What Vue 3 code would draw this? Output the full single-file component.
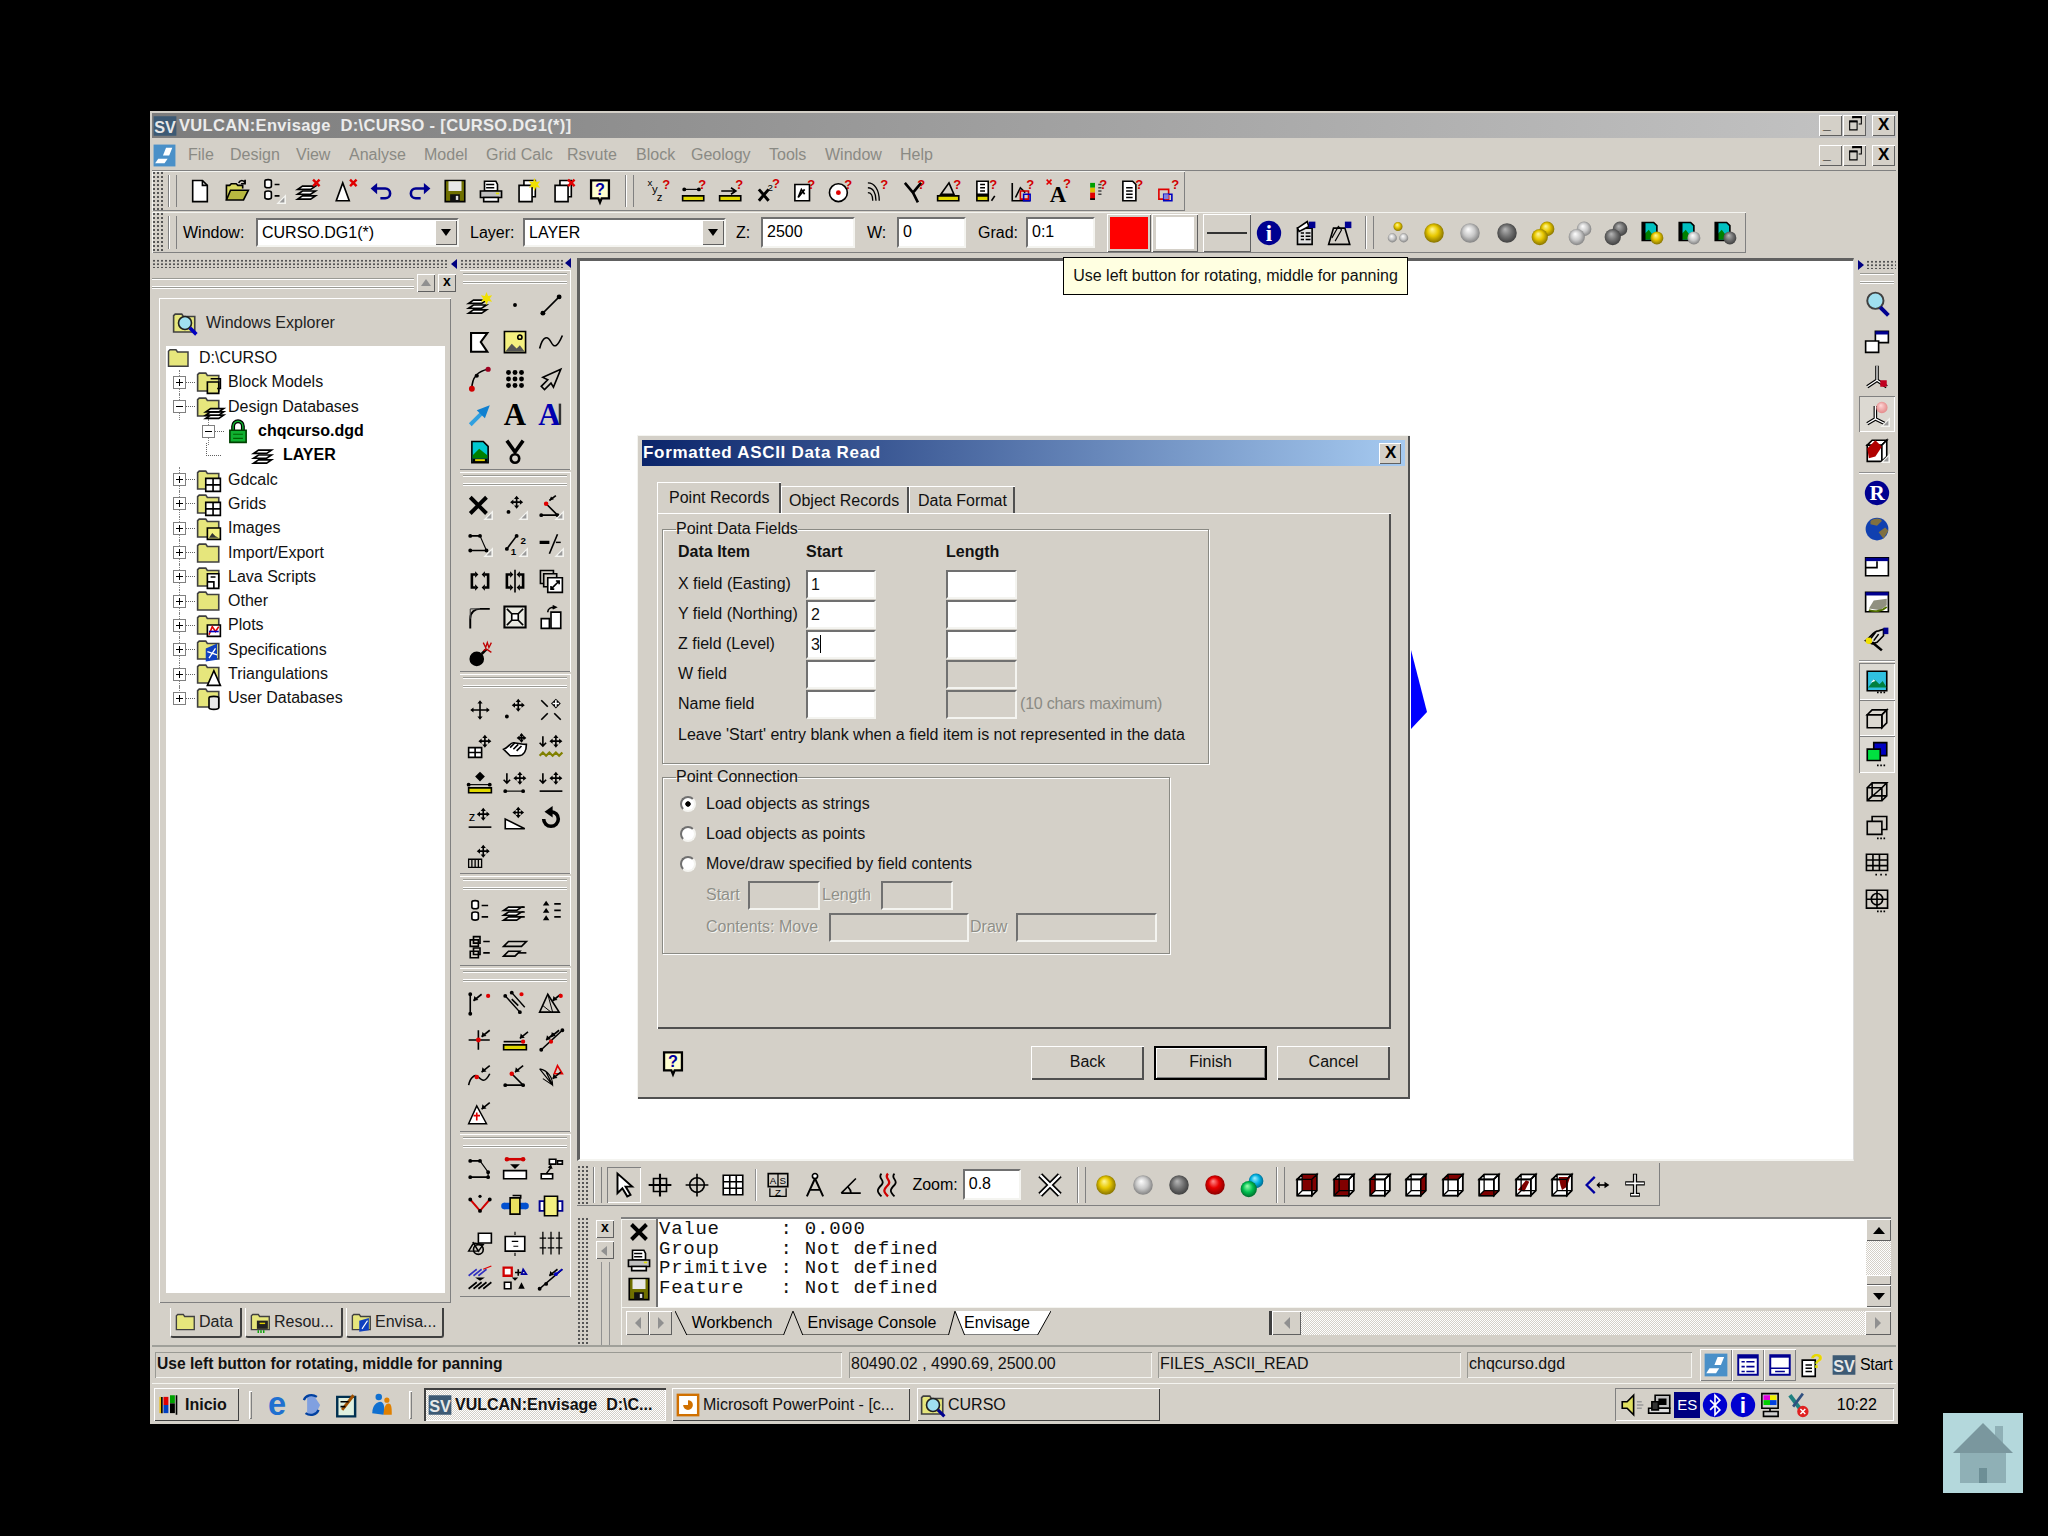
<script setup>
import { h } from 'vue'

// trazos de iconos en una rejilla de 16x16
const S = (d, c = '#000', w = 1) => ({ d, f: 'none', s: c, w })
const F = (d, c = '#000') => ({ d, f: c, s: 'none', w: 0 })
const B = (d, c = '#fff', s = '#000', w = 1) => ({ d, f: c, s, w })
const C = (x, y, r) => `M${x - r} ${y}a${r} ${r} 0 1 0 ${2 * r} 0a${r} ${r} 0 1 0 ${-2 * r} 0z`
const D = (x, y, r = 1.2, c = '#000') => F(C(x, y, r), c)
const T = (t, x, y, size, c = '#000', weight = '400', fam = 'Liberation Sans') => ({ t, x, y, size, c, weight, fam })

const RED = '#e00000'
const Q = (x = 13, y = 6.5) => T('?', x, y, 8, '#d00000', '700')
const XR = S('M10.5 1l4 4M14.5 1l-4 4', RED, 1.5)
const STAR = F('M12 0l1 2.5 2.5-.5-1.5 2 1.5 2-2.5-.5-1 2.5-1-2.5-2.5.5 1.5-2-1.5-2 2.5.5z', '#f0e000')
const CORNER = [F('M10 16h6v-6z', '#f4f4f0'), F('M12 15h3v-3z', '#9a9a9a')]
const cyl = (x, y) => B(`M${x} ${y + 1}c0-1.3 4-1.3 4 0v3c0 1.3-4 1.3-4 0z`, '#fff')
const lay = (x, y) => B(`M${x} ${y}l3-2h8l-3 2z`, '#fff')
const LAYERS = [lay(1, 13), lay(1, 10), lay(1, 7)]
const ruler = (y, x = 1, w = 13) => B(`M${x} ${y}h${w}v3H${x}z`, '#e0d800')
const mv = (x, y, r) => [
  S(`M${x - r} ${y}h${2 * r}M${x} ${y - r}v${2 * r}`),
  F(`M${x - r - 1} ${y}l2-1.6v3.2zM${x + r + 1} ${y}l-2-1.6v3.2zM${x} ${y - r - 1}l-1.6 2h3.2zM${x} ${y + r + 1}l-1.6-2h3.2z`)
]
const arr = (x, y) => [S(`M${x + 5} ${y - 4}L${x} ${y}`), F(`M${x} ${y}l.5-3 2.5 2.6z`)]
const ball = (x, y, r, g) => F(C(x, y, r), `url(#${g})`)
const FOLD = B('M1 13.5V3.5l1-1h4l1 1.5h7v9.5z', '#e6e67c', '#404040')
const sphereDoc = g => [B('M2 1.5h7l2 2v9H2z', '#00c0c0'), F('M3 9l3-3 3 4v2H3z', '#008000'), F('M2 1.5h2v11H2z', '#000'), ball(11, 11, 4, g)]
const cube = (...reds) => [
  B('M2 4.5h9v10H2z', '#fff'), B('M2 4.5l3-3h9l-3 3z', '#fff'), B('M11 4.5l3-3v10l-3 3z', '#fff'),
  ...reds.map(d => F(d, '#800000')),
  S('M5 1.5v10h9M5 11.5l-3 3M2 4.5h9v10H2zM2 4.5l3-3h9v10l-3 3M11 4.5l3-3', '#000', .8)
]
const FACE = {
  back: 'M5 1.5h9v10H5z', front: 'M2 4.5h9v10H2z', left: 'M2 4.5l3-3v10l-3 3z',
  right: 'M11 4.5l3-3v10l-3 3z', top: 'M2 4.5l3-3h9l-3 3z', bottom: 'M2 14.5l3-3h9l-3 3z'
}

const icons = {
  restore: [F('M5 1h9v2H5z'), S('M5.5 3V1.5h8v7H11'), F('M2 5h8v2H2z'), S('M2.5 6v8h7V6')],
  new: [B('M3.5 1.5h6l3 3v10h-9z'), S('M9.5 1.5v3h3')],
  open: [B('M1.5 13.5v-9h2l1-1h3l1 1h3v2', '#d8d860'), B('M1.5 13.5l2.5-6h11l-3 6z', '#b8b840'), S('M9 3c1-2 3-2 4 0M13 1v2.5h-2.5')],
  dblist: [cyl(3, 1), cyl(3, 8), S('M9 4h3M9 11h3'), ...CORNER],
  layerDel: [...LAYERS, XR],
  triDel: [B('M6 3L2 14h8z'), XR],
  undo: [S('M3.5 6.5H10a2.8 2.8 0 0 1 0 6H7', '#000090', 1.6), F('M1 6.5l4-3.5v7z', '#000090')],
  redo: [S('M12.5 6.5H6a2.8 2.8 0 0 0 0 6h3', '#000090', 1.6), F('M15 6.5l-4-3.5v7z', '#000090')],
  save: [B('M2 1.5h12v13H2z', '#707000'), F('M4 2h8v6H4z', '#e8e8e8'), F('M5 10h6v4.5H5z', '#111'), F('M8.5 11h1.5v2.5H8.5z', '#ddd')],
  print: [B('M4 2h7l1 2v4H4z'), B('M1.5 8h13v4h-13z', '#c0c0c0'), B('M3.5 12h9v2.5h-9z'), S('M5 4h5M5 6h5'), F('M11 9h2v1h-2z', '#e0e000')],
  cubeNew: [B('M5.5 1.5h7v10h-7z'), B('M2.5 4.5h8v10h-8z'), STAR],
  cubeDel: [B('M5.5 1.5h7v10h-7z'), B('M2.5 4.5h8v10h-8z'), XR],
  help: [B('M2.5 1.5h11v11H9l-1 2.5-1-2.5H2.5z', '#ffffd0', '#000', 1.4), T('?', 8, 10.5, 10, '#0000a0', '700')],

  xyzq: [T('x', 3, 5, 6), T('y', 6, 9, 7), T('z', 9, 14, 7), Q()],
  distq: [D(2, 7), D(11, 7), S('M2 7h9', '#000', .7), ruler(11), Q()],
  azimq: [S('M2 8h9M8 6l3 2-3 2'), ruler(11), Q()],
  xsqq: [S('M3 7l6 7M9 7l-6 7', '#000', 1.8), T('2', 10, 8, 6), Q(13.5, 6)],
  plotq: [B('M3 4h9v10H3z'), S('M5 12l2-5 2 3M9 7l-4 5'), Q()],
  targetq: [B(C(7, 9, 5.5)), D(7, 9, 1.5, RED), Q()],
  contq: [S('M3 3c4 0 7 4 7 11M3 6c3 0 5 3 5 8M3 9c2 0 3 2 3 5', '#000', .8), Q()],
  lineq: [S('M3 3l5 6 5-6M8 9L11 15', '#000', 1.6), Q()],
  triq: [S('M3 10L8 3l3 7z'), ruler(11), Q()],
  docq: [B('M3 2h7v8H3z'), S('M5 4h3M5 6h3M5 8h3'), ruler(11, 3, 7), S('M12 14l2-3'), Q()],
  chartq: [S('M2 3v11h11M4 12l3-6 3 3'), B('M7 8h5v5H7z', 'none', '#d00000'), B('M9 10h4v4H9z', 'none', '#0000c0'), Q()],
  textq: [S('M1 1l3 3M4 1L1 4', RED, 1), T('A', 8, 15, 14, '#000', '700', 'Liberation Serif'), Q(13.5, 6)],
  barq: [F('M5 3h3v3H5z', '#00a000'), F('M5 6h3v3H5z', '#e0c000'), F('M5 9h3v4H5z', RED), S('M5 13h3'), S('M10 4h2M10 6h2M10 8h2M10 10h2', '#444'), Q()],
  pageq: [B('M3 2h6l2 2v10H3z'), S('M5 6h4M5 8h4M5 10h4M5 12h4'), Q()],
  cubeq: [B('M3 7h6v6H3z', 'none', RED), B('M6 10h5v4H6z', 'none', '#0000c0'), F('M6 10h3v3H6z', '#8080e0'), Q()],

  info: [F(C(8, 8, 7.5), '#000090'), T('i', 8, 13, 14, '#fff', '700', 'Liberation Serif')],
  rep: [B('M4 5h9v10H4z', '#e0e0e0'), S('M6 8h2M6 10h2M6 12h2M9 8h3M9 10h3M9 12h3'), B('M4 5l6-4 1 3-6 3z'), F('M11 1h4v4h-4z', '#000090')],
  rep2: [S('M1 15l3-10h7l3 10z'), S('M3 11l4-7 2 2M5 13l4-7', '#000', .7), F('M11 1h4v4h-4z', '#000090')],
  tri3: [ball(8, 4, 2.8, 'bY'), ball(4.5, 11, 2.8, 'bW'), ball(11.5, 11, 2.8, 'bW')],
  bY: [ball(8, 8, 6, 'bY')],
  bW: [ball(8, 8, 6, 'bW')],
  bD: [ball(8, 8, 6, 'bD')],
  bR: [ball(8, 8, 6, 'bR')],
  bCG: [ball(10.5, 5.5, 4.5, 'bC'), ball(6, 10.5, 5, 'bG')],
  pY: [ball(10.5, 5.5, 4.5, 'bY'), ball(6, 10.5, 5, 'bY')],
  pW: [ball(10.5, 5.5, 4.5, 'bW'), ball(6, 10.5, 5, 'bW')],
  pD: [ball(10.5, 5.5, 4.5, 'bD'), ball(6, 10.5, 5, 'bD')],
  dY: sphereDoc('bY'),
  dW: sphereDoc('bW'),
  dD: sphereDoc('bD'),

  layerNew: [...LAYERS, STAR],
  point: [D(8, 8, 1.2)],
  line: [S('M3 13L13 3'), D(3, 13, 1.5), D(13, 3, 1.5)],
  flag: [B('M2.5 2.5h10l-4 5.5 4 6h-10z', '#fff', '#000', 1.3)],
  image: [B('M1.5 1.5h13v13h-13z', '#f4f080'), F('M2 14l4-5 3 3 2-2 3 4z', '#555'), B(C(11, 5, 1.3), '#f4f080')],
  curve: [S('M1 12c2-8 5-8 7-4s4 3 7-4')],
  arc: [S('M3 14c0-7 4-11 10-12', '#000', 1), D(3, 14, 1.8, '#d00000'), D(13, 2, 1.6, '#a00020'), D(6, 6, 1.3)],
  grid: [4, 8, 12].flatMap(y => [4, 8, 12].map(x => D(x, y, 1.5))),
  arrowOut: [B('M14 2L3 7l3 1.5-4 4 2 2 4-4L9.5 13z', '#d4d0c8', '#000', 1)],
  blueArrow: [S('M2 14L9 7', '#30a0e0', 2.4), F('M14 2L6 5l5 5z', '#1080d0')],
  textA: [T('A', 8, 14, 19, '#000', '700', 'Liberation Serif')],
  text3d: [T('A', 7, 14, 19, '#0000b0', '700', 'Liberation Serif'), S('M13.5 1v13', '#333', 1.5)],
  exe: [B('M3 1.5h7l3 3v10H3z', '#00c8d0'), F('M3.5 10l4-4 5 4v2h-9z', '#008000'), F('M3.5 12h9v2.5h-9z', '#000'), S('M5 13h6', '#e0d000', 1.2)],
  scissors: [S('M3 1l5 7 5-7', '#000', 2.2), B(C(8, 12, 2.6), 'none', '#000', 1.6)],

  xmark: [S('M2 2l10 10M12 2L2 12', '#000', 2.4), ...CORNER],
  ptmove: [D(4, 11), ...mv(9, 5, 3), ...CORNER],
  nearpt: [S('M2 13h10M5 6l7 7'), D(2, 13), D(12, 13), D(5, 6, 1.4, RED), S('M11 1L7 4'), F('M7 4l1-2.4 1.8 1.7z'), ...CORNER],
  conn: [S('M2 3h6M2 12h10'), S('M8 3l4 9', '#000', .7), D(2, 3), D(8, 3), D(2, 12), D(12, 12), ...CORNER],
  num12: [S('M3 11l6-8'), D(3, 11), D(9, 3), T('1', 7, 15, 6, '#000', '700'), T('2', 13, 8, 6, '#000', '700'), ...CORNER],
  break: [S('M1 7h6', '#000', 2), S('M7 14l5-12'), S('M11 7h3', '#000', .9), ...CORNER],
  sq2: [S('M5 4H3v8h2M11 4h2v8h-2', '#000', 1.6), F('M5 2l2 2-2 2zM5 10l2 2-2 2zM11 2L9 4l2 2zM11 10l-2 2 2 2z')],
  sq3: [S('M5 4H3v8h2M11 4h2v8h-2', '#000', 1.6), S('M8 1v14'), F('M5 2l2 2-2 2zM5 10l2 2-2 2zM11 2L9 4l2 2zM11 10l-2 2 2 2z')],
  copyx: [B('M1.5 1.5h8v8h-8z', '#d4d0c8'), B('M3.5 3.5h8v8h-8z', '#d4d0c8'), B('M6 6h9v9H6z'), S('M8 13l5-5M11 8h2v2M8 11v2h2')],
  fillet: [S('M2 15V9c0-4 3-6 6-6h6', '#000', 1.2), S('M2 3h6M2 3v6', '#444', .7)],
  fit: [B('M1.5 1.5h13v13h-13z', '#e8e8e0', '#000', 1.3), S('M3 3l3 3M13 3l-3 3M3 13l3-3M13 13l-3-3'), B('M6 6h4v4H6z')],
  dup: [B('M8 5h6v10H8z'), B('M2 9h5v6H2z'), S('M6 5c0-2 2-3 4-3M9 1l2 1-2 1')],
  bomb: [F(C(6, 11, 4.5)), S('M9 8l3-3', '#000', 1.6), S('M10 1l1.5 3 1-3 1 3 1.5-3M10 6l2-1 3 2', '#c00000', .8)],

  move: [...mv(8, 8, 5)],
  movept: [D(3, 12), ...mv(10, 5, 3)],
  spread: [S('M2 2l4 4M2 14l4-4M14 14l-4-4'), F('M11 1l3 3-3 3-3-3z'), S('M9 4h4M11 2v4', '#fff')],
  gridmove: [B('M1 9h8v6H1z'), S('M5 9v6M1 12h8'), ...mv(11, 5, 3)],
  handmove: [B('M1 10c3-1 4-4 6-4s5 1 8 1c0 3-1 7-5 7H5z'), S('M5 9l3-3M7 10l3-3M9 11l3-3'), ...mv(12, 3, 2)],
  dtmove: [...mv(11, 5, 3), S('M3 2v6M1 6l2 2 2-2'), S('M1 14l2-2 2 2 2-2 2 2 2-2 2 2 2-2', '#808000', 1.4)],
  rulermove: [F('M8 1l3 3-3 3-3-3z'), S('M1 9h13', '#000', .7), D(1, 9), D(14, 9), ruler(11, 1, 14)],
  ptsmove: [...mv(11, 5, 3), S('M3 2v6M1 6l2 2 2-2'), S('M2 13h11', '#000', .7), D(13, 13), D(2, 13)],
  linemove: [...mv(11, 5, 3), S('M3 2v6M1 6l2 2 2-2'), S('M1 13h14')],
  zmove: [T('z', 3, 9, 8), S('M1 13h14'), ...mv(10, 5, 3)],
  angmove: [B('M2 14V8l12 6z'), ...mv(10, 4, 2.6)],
  rotate: [S('M3.5 8a4.5 4.5 0 1 0 4.5-4.5H7', '#000', 2.2), F('M9 0L4 3.5 9 7z')],
  cylmove: [S('M1 10h8v5H1zM3 10v5M5 10v5M7 10v5', '#000', .8), ...mv(10, 5, 3)],

  dbl: [cyl(3, 1), cyl(3, 8), S('M9 4h4M9 11h4')],
  layerl: [...LAYERS, S('M12 5h2M12 8h2M12 11h2')],
  tril: [F('M5 1l2 3H3z'), F('M5 5.5l2 3H3z'), F('M5 10l2 3H3z'), S('M10 3h4M10 7h4M10 11h4')],
  cubel: [B('M2 3h5v4H2z', 'none'), B('M4 1h4v4H4z', 'none'), B('M2 10h5v4H2z', 'none'), B('M4 8h4v4H4z', 'none'), S('M10 4h4M10 11h4')],
  planel: [B('M1 7l3-3h11l-3 3z', '#d4d0c8'), B('M1 13l3-3h7l-3 3z', '#d4d0c8'), S('M10 11h5')],

  snapV: [S('M2 2v12'), D(2, 2), D(2, 14), ...arr(4, 6), D(13, 3, 1.3, RED)],
  snapRect: [S('M2 3l9 10M6 1l8 9', '#000', .9), D(2, 3), D(11, 13), D(6, 1), S('M6 5l4 4'), D(12, 2, 1.3, RED)],
  snapTri: [B('M6 2L1 13h12z', 'none'), S('M3 9l5 4M6 2l3 11', '#000', .6), ...arr(9, 6), D(14, 3, 1.3, RED)],
  snapCross: [S('M1 8h13M7 2v12'), D(7, 8, 1.5, RED), ...arr(9, 6)],
  snapRuler: [S('M1 9h13'), D(13, 9, 1.3, RED), ...arr(11, 7), ruler(11, 1, 14)],
  snapLine: [S('M2 14L15 2'), D(8, 9, 1.3, RED), D(2, 14), D(15, 2), ...arr(8, 6), ...arr(5, 8)],
  snapCurve: [S('M1 13c1-5 4-7 6-5s4 4 7-2'), D(6, 8, 1.4, RED), ...arr(9, 5)],
  snapPt: [S('M2 13h11L6 6'), D(2, 13), D(13, 13), D(6, 6, 1.4, RED), ...arr(8, 5)],
  snapCone: [S('M1 3c5 1 8 5 8 10L1 3M3 9l6 4M5 5l4 8', '#000', .7), B('M12 1l3 5h-5z', 'none', RED), ...arr(9, 9)],
  snapTri2: [B('M6 3L1 14h11z', '#fff', '#000', .9), S('M4 9h4M6 7v5', RED, 1), ...arr(9, 5)],

  polyl: [S('M2 3h6M2 13h11'), S('M8 3l5 7v3', '#000', .7), D(2, 3), D(8, 3), D(2, 13), D(13, 13), D(13, 10)],
  dimbox: [S('M3 2h10', '#d00000', 1.6), D(3, 2, 1.4, '#d00000'), D(13, 2, 1.4, '#d00000'), F('M5 5h6l-3 3z'), B('M1 9h14v5H1z')],
  flow: [B('M7 2h4v3H7z'), B('M12 3h3v2h-3z'), B('M2 11h7v3H2z'), S('M5 11l3-4'), F('M8 5l-2 2 3 1z')],
  zig: [S('M2 4l6 7 6-7', '#d00000', 1.2), D(2, 4), D(8, 11), D(14, 4), D(8, 2, 1)],
  blueBar: [F('M1 6h14v4H1z', '#0050d0'), D(1.5, 8, 2, '#0050d0'), D(14.5, 8, 2, '#0050d0'), B('M5 3h6v10H5z', '#e8e060'), B('M6.5 1.5h5v2', 'none')],
  yellowBox: [B('M1 5h3v6H1z', '#fff', '#000090', 1.2), B('M12 5h3v6h-3z', '#fff', '#000090', 1.2), B('M4 2h8v12H4z', '#f4f080')],
  mesh: [S('M1 13l3-5 3 5zM4 8l3 5 3-4z', '#000', .9), B('M7 2h8v6H7z'), B(C(7, 12, 3), 'none')],
  noteBox: [B('M2 4h12v9H2z'), S('M8 1v2M8 14v2M6 7h4M7 10h3', '#000', .7)],
  dash: [S('M3 1v14M8 1v14M13 1v14M1 5h4M6 5h4M11 5h4M1 11h4M6 11h4M11 11h4', '#000', .8)],
  hatch: [S('M1 6l5-4M4 6l5-4M7 6l5-4', '#3030c0'), S('M10 2l5-2', RED, .8), F('M5 7h6l-3 2z'), S('M1 14l5-4M4 14l5-4M7 14l5-4M10 14l5-4')],
  shape2: [B('M1 1h5v5H1z', '#fff', '#d00000', 1.4), S('M8 4h4M10 2v4'), B('M13 2l2 3h-3z', 'none', '#0000a0'), F('M6 7h4l-2 2z'), B('M1.5 10h4v4h-4z'), F('M12 10l2 4h-4z')],
  arrowLine: [S('M1 14L15 2'), D(1, 14), D(5, 11), D(11, 5, 1.2, '#0000c0'), S('M11 5l4-3', '#0000c0'), ...arr(7, 6)],

  mag: [B(C(7, 6, 5), '#a0e0f0', '#404040', 1.2), S('M10 10l5 5', '#000090', 2.4)],
  windows: [B('M7 2h8v7H7z'), F('M7 2h8v2H7z', '#000090'), B('M1 8h8v7H1z')],
  axes: [S('M8 1v9M8 10l6 4M8 10l-6 4', '#000', 2.2), S('M8 1v9M8 10l6 4M8 10l-6 4', '#fff', .8), F('M10 10h4v4h-4z', '#c00020')],
  axesBall: [S('M7 3v8M7 11l6 3M7 11l-5 3', '#000', 2.2), S('M7 3v8M7 11l6 3M7 11l-5 3', '#fff', .8), ball(11, 4, 3.5, 'bP'), ...CORNER],
  cubeRed: [B('M2 5h9v10H2z'), B('M2 5l3-3h9l-3 3z'), B('M11 5l3-3v10l-3 3z'), F('M2 7l5-5 4 4-4 6-4 1z', '#b00000'), ...CORNER],
  R: [F(C(8, 8, 7.5), '#000090'), T('R', 8, 12.5, 13, '#fff', '700', 'Liberation Serif')],
  globe: [F(C(8, 8, 7), '#1040b0'), F('M4 3c3-2 6-2 7 0l-3 3-4-1zM9 10l4-3 2 2-3 5z', '#807040')],
  split: [B('M1 3h14v11H1z'), F('M1 3h14v2H1z', '#000090'), S('M1 9h7V5')],
  img2: [B('M1 2h14v12H1z'), F('M1 2h14v2H1z', '#000090'), F('M3 12l3-5 8-1v4l-4 3z', '#909080'), S('M3 13c3 1 8 1 11-2', '#507000', 1.2)],
  handKey: [B('M1 9c3-2 5-6 8-6l3-1v4l-4 4-3 1z', '#e0e0d8'), S('M4 8l3-4M6 9l3-4'), F('M12 1h3v4h-3z', '#000090'), S('M5 10l6 5', '#000', 1.6), D(3, 9, 2, '#f0e000')],
  picGreen: [B('M2 2h12v12H2z', '#30c0e0'), F('M2.5 12l4-5 3 3 2-2 2.5 4z', '#008040'), F('M4 9l2-2 1 1z', '#fff'), S('M8 15h1M10 15h1M12 15h1', '#000', 1.2)],
  box: [B('M2 6h9v8H2z', 'none'), B('M2 6l3-3h9l-3 3z', 'none'), B('M11 6l3-3v8l-3 3z', 'none')],
  layersCol: [F('M6 1h8v8H6z', '#0000c0'), F('M2 5h8v7H2z', '#00e040'), S('M2 5h8v7H2zM6 5V1h8v8h-4'), S('M8 15h1M10 15h1M12 15h1', '#000', 1.2)],
  wire: [S('M2 6h9v8H2zM2 6l3-3h9l-3 3M11 14l3-3V3M2 14l9-8M5 3v8h9M5 11l-3 3')],
  stack: [B('M5 1.5h9v8H5z', 'none'), B('M2 4.5h9v8H2z', '#d4d0c8'), S('M8 15h1M10 15h1M12 15h1', '#000', 1.2)],
  table: [B('M1.5 2h13v10h-13z', 'none'), S('M5.5 2v10M9.5 2v10M1.5 5.5h13M1.5 9h13M7 14.5h1M10 14.5h1M13 14.5h1')],
  targetDots: [B('M1.5 2h13v11h-13z', 'none'), B(C(8, 7.5, 3.5), 'none'), S('M8 2v11M1.5 7.5h13M8 15h1M10 15h1M12 15h1')],

  arrow: [B('M4 1v12l3-3 3 5 2-1-3-5h4z', '#fff', '#000', 1.2)],
  crossBox: [B('M4 4h8v8H4z', 'none'), S('M8 1v14M1 8h14', '#000', 1.3)],
  crossCircle: [B(C(8, 8, 4.5), 'none'), S('M8 1v14M1 8h14')],
  grid2: [B('M2 2h12v12H2z'), S('M6 2v12M10 2v12M2 6h12M2 10h12')],
  abz: [B('M2 1h12v8H2z', 'none'), T('A', 5, 7.5, 6), T('S', 11, 7.5, 6), S('M8 1v8M3 10v5h10v-5', '#000', .8), T('Z', 8, 15, 6)],
  compass: [S('M8 4L3 15M8 4l5 11M4.5 11h7', '#000', 1.2), B(C(8, 2.5, 1.6))],
  angle: [S('M2 13h12M2 13L11 4'), S('M8 13c0-2-1-3-2-4')],
  waves: [S('M4 1C1 4 7 5 4 8s-3 4 0 7M12 1C9 4 15 5 12 8s-3 4 0 7', '#000', 1.1), S('M8 1C5 4 11 5 8 8s-3 4 0 7', '#d00000', 1.4)],
  bigX: [S('M2 2l12 12M14 2L2 14', '#000', 3.4), S('M2 2l12 12M14 2L2 14', '#fff', 1.5)],
  c1: cube(FACE.back),
  c2: cube(FACE.front),
  c3: cube(FACE.left),
  c4: cube(FACE.right),
  c5: cube(FACE.top),
  c6: cube(FACE.bottom),
  c7: cube('M3 11l5-6 2 1-3 6z'),
  c8: cube('M6 3h7l-2 6-3 2-1-3z'),
  blueArr: [B('M6 3L1 8l5 5', 'none', '#0000a0', 1.4), S('M8 8h6'), F('M15 8l-3-2v4zM7 8l2-2v4z')],
  plane: [S('M8 1v14M2 7h12M5 14h6', '#000', 2.6), S('M8 1.5v13M2.5 7h11M5.5 14h5', '#fff', 1)],

  logo3: [F('M1 1h14v14H1z', '#4a90c8'), F('M2 13l2-3h6l-2 3z', '#fff'), F('M7 8l2-5h4l-2 5z', '#fff')],
  listv: [B('M2 2h12v12H2z', '#fff', '#000090', 1.2), F('M2 2h12v2H2z', '#000090'), S('M4 6h2M7 6h5M4 9h2M7 9h5M4 12h2M7 12h5', '#000090')],
  panelv: [B('M2 2h12v12H2z', '#fff', '#000090', 1.2), F('M2 2h12v1.5H2z', '#000090'), S('M2 10h12M5 12h6', '#000090')],
  qdoc: [B('M2 5h8v10H2z'), S('M4 8h4M4 10h4M4 12h4'), T('?', 11, 10, 13, '#e8d800', '700')],
  sv: [F('M1 2h14v12H1z', '#3d5a74'), T('SV', 8, 12, 10, '#e8e8e8', '700')],
  win: [S('M2 3v10', '#f0c000', 1), F('M4 3h3v5H4z', RED), F('M4 8h3v5H4z', '#0040c0'), F('M8 2h3v5H8z', '#00a000'), F('M8 7h3v6H8z', '#000'), S('M3 3v10M12 2v12')],
  ie: [T('e', 8, 14, 20, '#2070d0', '700')],
  desk: [F('M5 2h4l4 6-3 6H5z', '#80a0e0'), S('M3 5c1-3 5-4 8-2M12 11c-1 3-5 4-8 2', '#0040a0', 1.4)],
  outl: [B('M2 3h11v12H2z', '#e0f0e0', '#003050', 1.5), S('M5 11l7-9', '#a05000', 1.8), S('M4 6h5M4 9h3')],
  msn: [D(6, 3, 2, '#1070d0'), D(11, 5, 1.6, '#e08000'), F('M2 13c0-5 3-7 5-7s3 3 2 8z', '#1070d0'), F('M9 14c0-4 1-7 3-7s2 3 2 7z', '#e08000')],
  ppt: [F('M1 1h14v14H1z', '#d07000'), B('M3 3h10v10H3z', '#fff', '#fff'), F('M8 8V5a3 3 0 1 1-3 3z', '#d07000')],
  foldMag: [FOLD, B(C(8, 8, 4), '#a0e0f0', '#202020', 1), S('M11 11l4 4', '#000090', 2)],
  speaker: [F('M2 6h3l4-4v12l-4-4H2z', '#e0e060'), S('M2 6h3l4-4v12l-4-4H2z'), S('M11 6h3M11 8h4M11 10h3', '#999', .8)],
  comp: [B('M5 2h9v8H5z', '#c0c0c0'), F('M7 4h5v4H7z', '#000'), B('M1 10h13v3H1z', '#e0e0e0'), B('M3 6h4v5H3z', '#333')],
  bt: [F(C(8, 8, 7.5), '#0000d0'), S('M5 5l6 6-3 3V2l3 3-6 6', '#fff', 1)],
  infoT: [F(C(8, 8, 7.5), '#0000d0'), T('i', 8, 13, 14, '#fff', '700')],
  monitor: [B('M3 1h10v9H3z', '#d0d0d0'), F('M4 2h4v3H4z', '#e000e0'), F('M8 2h4v3H8z', '#f0f000'), F('M4 5h4v3H4z', '#00d000'), F('M8 5h4v3H8z', '#0040e0'), B('M4 12h9v3H4z', '#d0d0d0'), S('M8 10v2')],
  tools: [S('M3 2l6 8', '#208080', 2.4), S('M11 1L5 9', '#305080', 1.6), D(11, 12, 3.5, '#e02020'), S('M9.5 10.5l3 3M12.5 10.5l-3 3', '#fff', .9)],

  folder: [FOLD],
  fBlock: [FOLD, B('M7 8h7v7H7z', '#e6e67c'), B('M9 6h6v6h-2', 'none')],
  fDesign: [FOLD, lay(6, 15), lay(6, 13), lay(6, 11)],
  fGrid: [FOLD, B('M6 7h9v8H6z'), S('M10.5 7v8M6 11h9')],
  fImg: [FOLD, B('M7 8h8v7H7z', '#f4f080'), F('M8 14l2-3 2 2 2 1z', '#333')],
  fScript: [FOLD, B('M7 6h7v9H7z'), S('M9 8h3M7 11h4v4')],
  fPlot: [FOLD, B('M7 8h8v7H7z'), S('M8 14l2-5 2 3 2-3', RED), S('M8 12h6', '#0000c0')],
  fSpec: [FOLD, F('M6 7l7-3v10l-7 1z', '#1040c0'), S('M8 13l4-6M7 9l6 2', '#fff', .8)],
  fTri: [FOLD, B('M11 6l-4 9h8z')],
  fDb: [FOLD, B('M8 8c0-1.3 6-1.3 6 0v6c0 1.3-6 1.3-6 0z', '#e8e8e8')],
  lock: [S('M5 8V5a3 3 0 0 1 6 0v3', '#000', 2.4), S('M5 8V5a3 3 0 0 1 6 0v3', '#10b030', .9), B('M3 7.5h10v7.5H3z', '#10b030', '#004000'), S('M5 10h6M5 12.5h6', '#006000', .7)],
  layerItem: [...LAYERS],
  expl: [FOLD, B(C(8, 8, 4), '#a0e0f0', '#202020', 1), S('M11 11l4 4', '#0000c0', 2.2)],
  fRes: [FOLD, F('M5 7h8v6H5z', '#222'), S('M6 14v2M8 14v2M10 14v2', '#00a000'), S('M7 9h4', '#e0d000')],
  fEnv: [FOLD, F('M6 7l7-2v9l-7 1z', '#1040c0'), S('M8 13l4-6', '#fff', .8)]
}

const Ico = (props) => h('svg', { class: 'ic', viewBox: '0 0 16 16', width: props.s || 26, height: props.s || 26 },
  (icons[props.n] || []).map(p => p.t
    ? h('text', { x: p.x, y: p.y, 'font-size': p.size, fill: p.c, 'font-weight': p.weight, 'font-family': p.fam, 'text-anchor': 'middle' }, p.t)
    : h('path', { d: p.d, fill: p.f, stroke: p.s, 'stroke-width': p.w })))
Ico.props = ['n', 's']

const menu = ['File', 'Design', 'View', 'Analyse', 'Model', 'Grid Calc', 'Rsvute', 'Block', 'Geology', 'Tools', 'Window', 'Help']
const tb1a = ['new', 'open', 'dblist', 'layerDel', 'triDel', 'undo', 'redo', 'save', 'print', 'cubeNew', 'cubeDel', 'help']
const tb1b = ['xyzq', 'distq', 'azimq', 'xsqq', 'plotq', 'targetq', 'contq', 'lineq', 'triq', 'docq', 'chartq', 'textq', 'barq', 'pageq', 'cubeq']
const tb2b = ['tri3', 'bY', 'bW', 'bD', 'pY', 'pW', 'pD', 'dY', 'dW', 'dD']

const toolGroups = [
  ['layerNew', 'point', 'line', 'flag', 'image', 'curve', 'arc', 'grid', 'arrowOut', 'blueArrow', 'textA', 'text3d', 'exe', 'scissors'],
  ['xmark', 'ptmove', 'nearpt', 'conn', 'num12', 'break', 'sq2', 'sq3', 'copyx', 'fillet', 'fit', 'dup', 'bomb'],
  ['move', 'movept', 'spread', 'gridmove', 'handmove', 'dtmove', 'rulermove', 'ptsmove', 'linemove', 'zmove', 'angmove', 'rotate', 'cylmove'],
  ['dbl', 'layerl', 'tril', 'cubel', 'planel'],
  ['snapV', 'snapRect', 'snapTri', 'snapCross', 'snapRuler', 'snapLine', 'snapCurve', 'snapPt', 'snapCone', 'snapTri2'],
  ['polyl', 'dimbox', 'flow', 'zig', 'blueBar', 'yellowBox', 'mesh', 'noteBox', 'dash', 'hatch', 'shape2', 'arrowLine']
]

const rightA = [
  { n: 'mag' }, { n: 'windows' }, { n: 'axes' }, { n: 'axesBall', on: true }, { n: 'cubeRed' }
]
const rightB = ['R', 'globe', 'split', 'img2', 'handKey']
const rightC = [
  { n: 'picGreen', on: true }, { n: 'box', on: true }, { n: 'layersCol', on: true },
  { n: 'wire' }, { n: 'stack' }, { n: 'table' }, { n: 'targetDots' }
]

const tree = [
  { lv: 1, ic: 'fBlock', t: 'Block Models', ex: '+' },
  { lv: 1, ic: 'fDesign', t: 'Design Databases', ex: '-' },
  { lv: 2, ic: 'lock', t: 'chqcurso.dgd', ex: '-', b: true },
  { lv: 3, ic: 'layerItem', t: 'LAYER', b: true },
  { lv: 1, ic: 'fGrid', t: 'Gdcalc', ex: '+' },
  { lv: 1, ic: 'fGrid', t: 'Grids', ex: '+' },
  { lv: 1, ic: 'fImg', t: 'Images', ex: '+' },
  { lv: 1, ic: 'folder', t: 'Import/Export', ex: '+' },
  { lv: 1, ic: 'fScript', t: 'Lava Scripts', ex: '+' },
  { lv: 1, ic: 'folder', t: 'Other', ex: '+' },
  { lv: 1, ic: 'fPlot', t: 'Plots', ex: '+' },
  { lv: 1, ic: 'fSpec', t: 'Specifications', ex: '+' },
  { lv: 1, ic: 'fTri', t: 'Triangulations', ex: '+' },
  { lv: 1, ic: 'fDb', t: 'User Databases', ex: '+', last: true }
]

const dataRows = [
  { label: 'X field (Easting)', start: '1', lenOff: false },
  { label: 'Y field (Northing)', start: '2', lenOff: false },
  { label: 'Z field (Level)', start: '3', lenOff: false, caret: true },
  { label: 'W field', start: '', lenOff: true },
  { label: 'Name field', start: '', lenOff: true, note: '(10 chars maximum)' }
]
const radios = [
  { t: 'Load objects as strings', on: true },
  { t: 'Load objects as points' },
  { t: 'Move/draw specified by field contents' }
]
const outLines = ['Value     : 0.000', 'Group     : Not defined', 'Primitive : Not defined', 'Feature   : Not defined']
const cubes = ['c1', 'c2', 'c3', 'c4', 'c5', 'c6', 'c7', 'c8', 'blueArr', 'plane']
const tray = ['speaker', 'comp', 'ES', 'bt', 'infoT', 'monitor', 'tools']
</script>

<template>
  <div class="screen">
    <svg class="defs" width="0" height="0">
      <defs>
        <radialGradient id="bY" cx=".5" cy=".5" r=".6" fx=".4" fy=".3"><stop offset="0" stop-color="#fff8a0" /><stop offset=".45" stop-color="#e8c800" /><stop offset="1" stop-color="#6a5a00" /></radialGradient>
        <radialGradient id="bW" cx=".5" cy=".5" r=".6" fx=".4" fy=".3"><stop offset="0" stop-color="#fff" /><stop offset=".5" stop-color="#c8c8c8" /><stop offset="1" stop-color="#6c6c6c" /></radialGradient>
        <radialGradient id="bD" cx=".5" cy=".5" r=".6" fx=".4" fy=".3"><stop offset="0" stop-color="#b8b8b8" /><stop offset=".5" stop-color="#707070" /><stop offset="1" stop-color="#303030" /></radialGradient>
        <radialGradient id="bR" cx=".5" cy=".5" r=".6" fx=".4" fy=".3"><stop offset="0" stop-color="#ff9090" /><stop offset=".45" stop-color="#e80000" /><stop offset="1" stop-color="#700000" /></radialGradient>
        <radialGradient id="bC" cx=".5" cy=".5" r=".6" fx=".4" fy=".3"><stop offset="0" stop-color="#a0f0ff" /><stop offset=".5" stop-color="#00b0e0" /><stop offset="1" stop-color="#005070" /></radialGradient>
        <radialGradient id="bG" cx=".5" cy=".5" r=".6" fx=".4" fy=".3"><stop offset="0" stop-color="#a0ffb0" /><stop offset=".5" stop-color="#00c050" /><stop offset="1" stop-color="#005020" /></radialGradient>
        <radialGradient id="bP" cx=".5" cy=".5" r=".6" fx=".4" fy=".3"><stop offset="0" stop-color="#ffd8d8" /><stop offset="1" stop-color="#e08080" /></radialGradient>
      </defs>
    </svg>

    <div class="win">
      <!-- Barra de titulo -->
      <div class="title">
        <Ico n="sv" :s="26" />
        <span class="title-text">VULCAN:Envisage&nbsp; D:\CURSO - [CURSO.DG1(*)]</span>
        <div class="caps">
          <span class="cap">_</span><span class="cap"><Ico n="restore" :s="17" /></span><span class="cap x">X</span>
        </div>
      </div>

      <!-- Menu -->
      <div class="menu">
        <Ico n="logo3" :s="25" />
        <div class="menu-items">
          <span v-for="m in menu" :key="m">{{ m }}</span>
        </div>
        <div class="caps">
          <span class="cap">_</span><span class="cap"><Ico n="restore" :s="17" /></span><span class="cap x">X</span>
        </div>
      </div>

      <!-- Barras de herramientas -->
      <div class="tb-row">
        <div class="toolbar tb1">
          <i class="dots"></i><i class="handle"></i>
          <div class="btns first"><span v-for="n in tb1a" :key="n" class="tb"><Ico :n="n" /></span></div>
          <i class="handle mid"></i>
          <div class="btns"><span v-for="n in tb1b" :key="n" class="tb"><Ico :n="n" /></span></div>
        </div>
      </div>
      <div class="tb-row">
        <div class="toolbar tb2">
          <i class="dots"></i><i class="handle"></i>
          <span class="lbl win-lbl">Window:</span>
          <div class="combo c-win"><span>CURSO.DG1(*)</span><b class="arrow-btn"></b></div>
          <span class="lbl lay-lbl">Layer:</span>
          <div class="combo c-lay"><span>LAYER</span><b class="arrow-btn"></b></div>
          <span class="lbl z-lbl">Z:</span>
          <div class="field f-z">2500</div>
          <span class="lbl w-lbl">W:</span>
          <div class="field f-w">0</div>
          <span class="lbl g-lbl">Grad:</span>
          <div class="field f-g">0:1</div>
          <span class="swatch red"><i></i></span>
          <span class="swatch white"><i></i></span>
          <span class="swatch stroke"><i></i></span>
          <span class="tb t2"><Ico n="info" /></span>
          <span class="tb t2"><Ico n="rep" /></span>
          <span class="tb t2"><Ico n="rep2" /></span>
          <i class="handle mid2"></i>
          <div class="btns"><span v-for="n in tb2b" :key="n" class="tb"><Ico :n="n" /></span></div>
        </div>
      </div>

      <div class="work">
        <!-- Panel izquierdo -->
        <div class="dock">
          <div class="strip"><i class="dots-h"></i><b class="tri-l"></b></div>
          <div class="dock-head">
            <i class="bars"></i>
            <span class="mini up"></span>
            <span class="mini xx">x</span>
          </div>
          <div class="panel">
            <div class="panel-title"><Ico n="expl" /><span>Windows Explorer</span></div>
            <div class="tree">
              <div class="row root"><Ico n="folder" :s="24" /><span>D:\CURSO</span></div>
              <div v-for="r in tree" :key="r.t" class="row" :class="['lv' + r.lv, { bold: r.b, last: r.last }]">
                <span v-if="r.ex" class="exp" :class="r.ex === '+' ? 'plus' : 'minus'"></span>
                <span v-else class="exp-none"></span>
                <Ico :n="r.ic" />
                <span class="row-t">{{ r.t }}</span>
              </div>
            </div>
          </div>
          <div class="dock-tabs">
            <span class="dtab on"><Ico n="folder" />Data</span>
            <span class="dtab"><Ico n="fRes" />Resou...</span>
            <span class="dtab"><Ico n="fEnv" />Envisa...</span>
          </div>
        </div>

        <!-- Columna de herramientas -->
        <div class="tools">
          <div class="strip strip-t"><i class="dots-h"></i><b class="tri-l"></b></div>
          <div v-for="(g, i) in toolGroups" :key="i" class="tgroup">
            <i class="bars"></i>
            <div class="tgrid"><span v-for="n in g" :key="n" class="tcell"><Ico :n="n" /></span></div>
          </div>
        </div>

        <!-- Zona central -->
        <div class="center">
          <div class="top-row">
            <div class="canvas">
              <svg class="shape" width="18" height="82" viewBox="0 0 18 82"><path d="M0 0L16 62 0 79z" fill="#0000ff" /></svg>
            </div>
            <!-- Barra derecha -->
            <div class="right">
              <div class="strip strip-r"><b class="tri-r"></b><i class="dots-h"></i></div>
              <i class="bars"></i>
              <span v-for="b in rightA" :key="b.n" class="rb" :class="{ on: b.on }"><Ico :n="b.n" /></span>
              <i class="rsep"></i>
              <span v-for="n in rightB" :key="n" class="rb"><Ico :n="n" /></span>
              <i class="rsep"></i>
              <span v-for="b in rightC" :key="b.n" class="rb" :class="{ on: b.on }"><Ico :n="b.n" /></span>
            </div>
          </div>

          <div class="bt-row">
            <i class="dots-v short"></i><i class="handle"></i>
            <span class="tb on"><Ico n="arrow" /></span>
            <span class="tb"><Ico n="crossBox" /></span>
            <span class="tb"><Ico n="crossCircle" /></span>
            <span class="tb"><Ico n="grid2" /></span>
            <i class="vline"></i>
            <span class="tb"><Ico n="abz" /></span>
            <span class="tb"><Ico n="compass" /></span>
            <span class="tb"><Ico n="angle" /></span>
            <span class="tb"><Ico n="waves" /></span>
            <span class="lbl zoom-lbl">Zoom:</span>
            <div class="field f-zoom">0.8</div>
            <span class="tb zx"><Ico n="bigX" /></span>
            <i class="handle h3"></i>
            <span class="tb"><Ico n="bY" /></span>
            <span class="tb"><Ico n="bW" /></span>
            <span class="tb"><Ico n="bD" /></span>
            <span class="tb"><Ico n="bR" /></span>
            <span class="tb"><Ico n="bCG" /></span>
            <i class="handle h4"></i>
            <span v-for="n in cubes" :key="n" class="tb"><Ico :n="n" /></span>
          </div>

          <div class="output">
            <i class="dots-v"></i>
            <div class="side">
              <span class="mini xx">x</span>
              <span class="mini left"></span>
              <i class="side-bars"></i>
            </div>
            <div class="out-main">
              <div class="out-top">
                <div class="out-icons">
                  <svg class="ic" viewBox="0 0 16 16" width="24" height="24"><path d="M3 3l10 10M13 3L3 13" stroke="#000" stroke-width="2.6" fill="none" /></svg>
                  <Ico n="print" />
                  <Ico n="save" />
                </div>
                <div class="console">
                  <pre v-for="l in outLines" :key="l">{{ l }}</pre>
                </div>
                <div class="vscroll">
                  <span class="sb-btn"><b class="up-tri"></b></span>
                  <span class="sb-track"></span>
                  <span class="sb-thumb"></span>
                  <span class="sb-btn"><b class="down-tri"></b></span>
                </div>
              </div>
              <div class="out-tabs">
                <span class="sb-h"><b class="tri-g-l"></b></span>
                <span class="sb-h"><b class="tri-g-r"></b></span>
                <span class="xtab first-x"><svg class="xtab-bg" viewBox="0 0 100 24" preserveAspectRatio="none"><path d="M0 0L10 24H92L100 0" fill="#d4d0c8" stroke="#000" vector-effect="non-scaling-stroke" /></svg><em>Workbench</em></span>
                <span class="xtab sec-x"><svg class="xtab-bg" viewBox="0 0 100 24" preserveAspectRatio="none"><path d="M0 0L6 24H96L100 0" fill="#d4d0c8" stroke="#000" vector-effect="non-scaling-stroke" /></svg><em>Envisage Console</em></span>
                <span class="xtab on-x"><svg class="xtab-bg" viewBox="0 0 100 24" preserveAspectRatio="none"><path d="M0 0L10 24H86L100 0" fill="#fff" stroke="#000" vector-effect="non-scaling-stroke" /></svg><em>Envisage</em></span>
                <span class="tab-gap"></span>
                <span class="sb-h thumb-l"><b class="tri-g-l"></b></span>
                <span class="hatch"></span>
                <span class="sb-h end"><b class="tri-g-r"></b></span>
              </div>
            </div>
          </div>
        </div>
      </div>

      <!-- Barra de estado -->
      <div class="status">
        <span class="st st1">Use left button for rotating, middle for panning</span>
        <span class="st st2">80490.02 , 4990.69, 2500.00</span>
        <span class="st st3">FILES_ASCII_READ</span>
        <span class="st st4">chqcurso.dgd</span>
        <span class="st-ic on"><Ico n="logo3" /></span>
        <span class="st-ic on"><Ico n="listv" /></span>
        <span class="st-ic on"><Ico n="panelv" /></span>
        <span class="st-ic"><Ico n="qdoc" /></span>
        <span class="st-ic"><Ico n="sv" /></span>
        <span class="st-start">Start</span>
      </div>

      <!-- Barra de tareas -->
      <div class="taskbar">
        <span class="task inicio"><Ico n="win" />Inicio</span>
        <i class="tk-sep first"></i>
        <span class="quick"><Ico n="ie" /></span>
        <span class="quick"><Ico n="desk" /></span>
        <span class="quick"><Ico n="outl" /></span>
        <span class="quick"><Ico n="msn" /></span>
        <i class="tk-sep"></i>
        <span class="task t-active"><Ico n="sv" />VULCAN:Envisage&nbsp; D:\C...</span>
        <span class="task t-ppt"><Ico n="ppt" />Microsoft PowerPoint - [c...</span>
        <span class="task t-cur"><Ico n="foldMag" />CURSO</span>
        <div class="tray">
          <template v-for="n in tray" :key="n">
            <span v-if="n === 'ES'" class="es">ES</span>
            <Ico v-else :n="n" />
          </template>
          <span class="clock">10:22</span>
        </div>
      </div>

      <!-- Tooltip -->
      <div class="tooltip">Use left button for rotating, middle for panning</div>

      <!-- Dialogo -->
      <div class="dialog">
        <div class="dlg-title">
          <span>Formatted ASCII Data Read</span>
          <span class="cap x dlg-x">X</span>
        </div>
        <div class="dlg-tabs">
          <span class="dtb on">Point Records</span>
          <span class="dtb">Object Records</span>
          <span class="dtb">Data Format</span>
        </div>
        <div class="dlg-page">
          <fieldset class="fs fs1">
            <legend>Point Data Fields</legend>
            <div class="frow head">
              <b class="c-label">Data Item</b><b class="c-start">Start</b><b class="c-len">Length</b>
            </div>
            <div v-for="r in dataRows" :key="r.label" class="frow">
              <span class="c-label">{{ r.label }}</span>
              <span class="inp c-start">{{ r.start }}<i v-if="r.caret" class="caret"></i></span>
              <span class="inp c-len" :class="{ off: r.lenOff }"></span>
              <span v-if="r.note" class="note">{{ r.note }}</span>
            </div>
            <p class="hint">Leave 'Start' entry blank when a field item is not represented in the data</p>
          </fieldset>
          <fieldset class="fs fs2">
            <legend>Point Connection</legend>
            <div v-for="r in radios" :key="r.t" class="radio-row">
              <span class="radio" :class="{ on: r.on }"></span>{{ r.t }}
            </div>
            <div class="sub-row">
              <span class="dis l1">Start</span><span class="inp off s1"></span>
              <span class="dis l2">Length</span><span class="inp off s2"></span>
            </div>
            <div class="sub-row">
              <span class="dis l3">Contents: Move</span><span class="inp off s3"></span>
              <span class="dis l4">Draw</span><span class="inp off s4"></span>
            </div>
          </fieldset>
        </div>
        <div class="dlg-foot">
          <Ico n="help" />
          <span class="grow"></span>
          <span class="btn">Back</span>
          <span class="btn def">Finish</span>
          <span class="btn">Cancel</span>
        </div>
      </div>
    </div>

    <!-- Boton de inicio de la presentacion -->
    <div class="home">
      <svg width="80" height="80" viewBox="0 0 80 80">
        <path d="M52 13h8v20h-8z" fill="#8fb0b6" />
        <path d="M17 40h46v30H17z" fill="#8fb0b6" />
        <path d="M36 55h8v15h-8z" fill="#6d8f96" />
        <path d="M40 10L10 40h60z" fill="#7a979e" />
      </svg>
    </div>
  </div>
</template>

<style>
html, body { margin: 0; background: #000; }
</style>

<style scoped>
.screen {
  position: relative;
  width: 2048px;
  height: 1536px;
  background: #000;
  padding: 111px 150px 0;
  box-sizing: border-box;
  overflow: hidden;
  font-family: "Liberation Sans", Arial, sans-serif;
  font-size: 16px;
  color: #000;
}
.defs { position: absolute; }
.ic { display: block; flex: none; overflow: visible; }
i { display: block; }

.win {
  position: relative;
  width: 1748px;
  height: 1313px;
  background: #d4d0c8;
  display: flex;
  flex-direction: column;
  padding: 2px 2px 0;
  box-sizing: border-box;
}

/* Titulo y menu */
.title {
  height: 25px;
  display: flex;
  align-items: center;
  background: linear-gradient(90deg, #7c7c7c, #c4c4c4);
  color: #ececec;
  font-weight: 700;
  font-size: 16.5px;
  flex: none;
}
.title-text { margin-left: 1px; white-space: pre; letter-spacing: .33px; }
.caps { margin-left: auto; display: flex; gap: 1px; padding-right: 1px; }
.cap {
  width: 23px;
  height: 21px;
  background: #d4d0c8;
  box-shadow: inset 1px 1px #fff, inset -1px -1px #606060;
  color: #000;
  font-size: 14px;
  font-weight: 700;
  line-height: 18px;
  overflow: hidden;
  padding-left: 4px;
  box-sizing: border-box;
  flex: none;
}
.cap.x { font-size: 17px; margin-left: 5px; padding-left: 6px; line-height: 20px; }
.menu {
  height: 31px;
  display: flex;
  align-items: center;
  border-bottom: 1px solid #808080;
  box-sizing: border-box;
  flex: none;
  margin-top: 2px;
}
.menu-items { display: flex; margin-left: 11px; color: #8a8a84; font-size: 16px; }
.menu-items span:nth-child(1) { width: 42px; }
.menu-items span:nth-child(2) { width: 66px; }
.menu-items span:nth-child(3) { width: 53px; }
.menu-items span:nth-child(4) { width: 75px; }
.menu-items span:nth-child(5) { width: 62px; }
.menu-items span:nth-child(6) { width: 81px; }
.menu-items span:nth-child(7) { width: 69px; }
.menu-items span:nth-child(8) { width: 55px; }
.menu-items span:nth-child(9) { width: 78px; }
.menu-items span:nth-child(10) { width: 56px; }
.menu-items span:nth-child(11) { width: 75px; }

/* Toolbars */
.tb-row { flex: none; display: flex; }
.toolbar {
  display: flex;
  align-items: center;
  box-shadow: inset 1px 1px #f4f4f0, inset -1px -1px #808080;
}
.tb1 { height: 40px; width: 1033px; }
.tb2 { height: 41px; width: 1594px; margin-top: 1px; }
.dots {
  width: 12px;
  height: 100%;
  background: radial-gradient(#555 1px, transparent 1.3px) 0 0 / 4px 4px;
  flex: none;
}
.handle {
  width: 9px;
  height: 80%;
  margin-left: 4px;
  border-left: 1px solid #808080;
  border-right: 1px solid #808080;
  box-shadow: inset 1px 0 #fff;
  box-sizing: border-box;
  flex: none;
}
.handle.mid { margin-left: 6px; margin-right: 6px; }
.handle.mid2 { margin-left: 7px; margin-right: 6px; }
.btns { display: flex; }
.btns.first { margin-left: 5px; }
.tb {
  width: 36.4px;
  height: 36px;
  display: flex;
  align-items: center;
  justify-content: center;
  flex: none;
  box-sizing: border-box;
}
.tb.on { box-shadow: inset 1px 1px #808080, inset -1px -1px #fff; }
.lbl { flex: none; white-space: nowrap; }
.win-lbl { margin-left: 6px; width: 73px; }
.lay-lbl { margin-left: 11px; width: 53px; }
.z-lbl { margin-left: 10px; width: 25px; }
.w-lbl { margin-left: 12px; width: 30px; }
.g-lbl { margin-left: 12px; width: 48px; }
.combo {
  height: 29px;
  background: #fff;
  display: flex;
  align-items: center;
  justify-content: space-between;
  padding-left: 4px;
  box-sizing: border-box;
  border: 2px solid;
  border-color: #707070 #f4f4f0 #f4f4f0 #707070;
  font-size: 16px;
  flex: none;
}
.c-win { width: 203px; }
.c-lay { width: 203px; }
.arrow-btn {
  width: 22px;
  height: 25px;
  background: #d4d0c8;
  box-shadow: inset 1px 1px #fff, inset -1px -1px #606060;
  position: relative;
}
.arrow-btn::after {
  content: '';
  position: absolute;
  left: 6px;
  top: 9px;
  border: 5px solid transparent;
  border-top: 7px solid #000;
  border-bottom: 0;
}
.field {
  height: 31px;
  background: #fff;
  padding-left: 4px;
  box-sizing: border-box;
  border: 2px solid;
  border-color: #707070 #f4f4f0 #f4f4f0 #707070;
  line-height: 25px;
  flex: none;
}
.f-z { width: 94px; }
.f-w { width: 69px; }
.f-g { width: 69px; }
.swatch {
  width: 44px;
  height: 38px;
  box-shadow: inset 1px 1px #fff, inset -1px -1px #606060;
  display: flex;
  align-items: center;
  justify-content: center;
  flex: none;
}
.swatch.red { margin-left: 12px; background: #d4d0c8; }
.swatch.red i { width: 38px; height: 32px; background: #f00; }
.swatch.white { width: 46px; margin-left: 1px; }
.swatch.white i { width: 38px; height: 32px; background: #fff; }
.swatch.stroke { width: 48px; margin-left: 5px; }
.swatch.stroke i { width: 40px; height: 2px; background: #333; }
.t2 { width: 35.5px; }

/* Zona de trabajo */
.work {
  flex: 1;
  min-height: 0;
  display: flex;
  margin-top: 2px;
  border-bottom: 2px solid #a0a09a;
  box-sizing: border-box;
}
.dock { width: 305px; flex: none; display: flex; flex-direction: column; padding-top: 1px; box-sizing: border-box; }
.strip { height: 13px; display: flex; align-items: center; flex: none; margin: 1px 0; }
.dots-h {
  flex: 1;
  height: 9px;
  background: radial-gradient(#555 1px, transparent 1.2px) 0 0 / 4px 3.5px;
}
.tri-l { width: 0; height: 0; border: 5px solid transparent; border-right: 6px solid #000080; border-left: 0; margin-left: 2px; }
.tri-r { width: 0; height: 0; border: 5px solid transparent; border-left: 6px solid #000080; border-right: 0; margin-right: 2px; }
.dock-head { height: 22px; display: flex; align-items: center; gap: 3px; margin-top: 1px; padding-right: 1px; flex: none; }
.bars {
  display: block;
  flex: 1;
  height: 10px;
  border-top: 1px solid #9a9a94;
  border-bottom: 1px solid #9a9a94;
  box-shadow: inset 0 1px #fff, inset 0 -1px #fff, 0 1px #fff;
  box-sizing: border-box;
}
.mini {
  width: 18px;
  height: 18px;
  background: #d4d0c8;
  box-shadow: inset 1px 1px #fff, inset -1px -1px #606060;
  position: relative;
  flex: none;
  font-size: 14px;
  font-weight: 700;
  text-align: center;
  line-height: 15px;
}
.mini.up::after {
  content: '';
  position: absolute;
  left: 4px;
  top: 5px;
  border: 5px solid transparent;
  border-bottom: 7px solid #909090;
  border-top: 0;
}
.mini.left::after {
  content: '';
  position: absolute;
  left: 5px;
  top: 5px;
  border: 5px solid transparent;
  border-right: 6px solid #909090;
  border-left: 0;
}
.panel {
  flex: 1;
  margin: 4px 6px 0 7px;
  box-shadow: inset 1px 1px #fff, inset -1px -1px #808080;
  display: flex;
  flex-direction: column;
  padding: 2px 6px 10px 7px;
  min-height: 0;
}
.panel-title { height: 46px; display: flex; align-items: center; gap: 8px; padding-left: 6px; color: #222; flex: none; }
.tree { flex: 1; background: #fff; padding-top: 0; min-height: 0; position: relative; z-index: 0; }
.row { height: 24.3px; display: flex; align-items: center; white-space: nowrap; color: #111; }
.root { padding-left: 1px; gap: 8px; }
.row-t { margin-left: 6px; }
.lv1 { padding-left: 7px; }
.lv2 { padding-left: 36px; }
.lv3 { padding-left: 58px; }
.lv2 .row-t { margin-left: 7px; }
.lv3 .row-t { margin-left: 5px; }
.exp-none { width: 30px; flex: none; height: 100%; position: relative; margin-left: -2px; }
.exp-none::after { content: ''; position: absolute; left: -16px; top: 0; height: 50%; width: 14px; border-left: 1px dotted #606060; border-bottom: 1px dotted #606060; }
.exp {
  position: relative;
  width: 13px;
  height: 13px;
  border: 1px solid #808080;
  background-color: #fff;
  box-sizing: border-box;
  flex: none;
  margin-right: 10px;
  background-repeat: no-repeat;
  background-position: center;
}
.exp::after { content: ''; position: absolute; left: 12px; top: 5px; width: 9px; border-top: 1px dotted #606060; }
.exp::before { content: ''; position: absolute; left: 5px; top: -7px; height: 26px; border-left: 1px dotted #808080; z-index: -1; }
.row.last .exp::before { height: 7px; }
.plus { background-image: linear-gradient(#000, #000), linear-gradient(#000, #000); background-size: 7px 1px, 1px 7px; }
.minus { background-image: linear-gradient(#000, #000); background-size: 7px 1px; }
.bold { font-weight: 700; color: #000; }
.dock-tabs { height: 42px; display: flex; gap: 3px; padding: 5px 0 0 18px; flex: none; box-sizing: border-box; }
.dtab {
  height: 30px;
  display: flex;
  align-items: center;
  padding: 0 4px;
  width: 90px;
  box-sizing: border-box;
  white-space: nowrap;
  color: #222;
  border-bottom: 2px solid #404040;
  border-right: 2px solid #404040;
  border-left: 1px solid #fff;
  border-radius: 0 0 3px 3px;
}
.dtab:first-child { width: 72px; }
.dtab:nth-child(2) { width: 98px; }
.dtab:nth-child(3) { width: 98px; }
.dtab .ic { width: 22px; height: 22px; margin-right: 2px; }

/* Herramientas */
.tools { width: 111px; margin-left: 3px; flex: none; display: flex; flex-direction: column; padding-top: 2px; box-sizing: border-box; gap: 2px; }
.strip-t { margin: 0 0 -1px; height: 12px; }
.tgroup {
  padding: 3px 3px 0;
  box-shadow: inset 0 -1px #808080, inset 0 1px #fff;
  border-right: 1px solid #fff;
}
.tgroup > .bars { height: 10px; }
.tgrid { display: grid; grid-template-columns: repeat(3, 35.6px); grid-auto-rows: 36.6px; margin-top: 4.1px; margin-left: -1px; }
.tcell { display: flex; align-items: center; justify-content: center; }

/* Centro */
.center { flex: 1; min-width: 0; margin-left: 6px; display: flex; flex-direction: column; padding-top: 3px; box-sizing: border-box; }
.top-row { display: flex; height: 903px; flex: none; }
.canvas {
  position: relative;
  flex: 1;
  min-width: 0;
  background: #fff;
  border-left: 3px solid #606060;
  border-top: 3px solid #606060;
  border-right: 1px solid #ddd;
  border-bottom: 2px solid #f4f4f0;
  box-sizing: border-box;
}
.shape { position: absolute; left: 831px; top: 389px; }
.bt-row {
  height: 43px;
  flex: none;
  display: flex;
  align-items: center;
  width: 1083px;
  margin-top: 2px;
  box-shadow: inset -1px -1px #808080;
}
.dots-v {
  width: 12px;
  height: 100%;
  background: radial-gradient(#555 1px, transparent 1.3px) 0 0 / 4px 4px;
  flex: none;
}
.dots-v.short { height: 90%; }
.bt-row .handle { height: 36px; }
.bt-row .tb.on { width: 34px; margin-left: 5px; margin-right: 1px; }
.vline { width: 1px; height: 32px; background: #909090; box-shadow: 1px 0 #fff; margin: 0 4px; flex: none; }
.zoom-lbl { width: 52px; margin-left: 0; text-align: right; }
.f-zoom { width: 58px; margin-left: 5px; }
.zx { margin-left: 11px; }
.h3 { margin-left: 9px; margin-right: 2px; }
.h4 { margin-left: 6px; margin-right: 4px; }

.output { flex: 1; min-height: 0; display: flex; margin-top: 11px; padding-right: 5px; }
.output > .dots-v { height: 100%; }
.side { width: 32px; flex: none; display: flex; flex-direction: column; align-items: center; gap: 3px; padding-top: 3px; box-sizing: border-box; }
.side-bars { flex: 1; width: 9px; border-left: 1px solid #909090; border-right: 1px solid #909090; box-sizing: border-box; }
.out-main { flex: 1; min-width: 0; display: flex; flex-direction: column; box-shadow: inset 1px 1px #f4f4f0; border-top: 2px solid #808080; box-sizing: border-box; }
.out-top { flex: 1; min-height: 0; display: flex; }
.out-icons { width: 35px; flex: none; display: flex; flex-direction: column; align-items: center; gap: 3px; padding-top: 1px; }
.console {
  flex: 1;
  min-width: 0;
  background: #fff;
  border-left: 2px solid #707070;
  padding-top: 0;
  box-sizing: border-box;
}
.console pre {
  margin: 0;
  height: 19.7px;
  font-family: "Liberation Mono", monospace;
  font-size: 19px;
  letter-spacing: .75px;
  line-height: 20px;
  color: #111;
  padding-left: 1px;
}
.vscroll { width: 25px; flex: none; display: flex; flex-direction: column; background: #fff; }
.sb-btn { height: 22px; background: #d4d0c8; box-shadow: inset 1px 1px #fff, inset -1px -1px #606060; display: flex; align-items: center; justify-content: center; flex: none; }
.sb-track { flex: 1; background: repeating-conic-gradient(#d4d0c8 0 25%, #fff 0 50%) 0 0 / 2px 2px; }
.sb-thumb { height: 10px; background: #d4d0c8; box-shadow: inset 1px 1px #fff, inset -1px -1px #606060; flex: none; }
.up-tri { border: 6px solid transparent; border-bottom: 7px solid #000; border-top: 0; }
.down-tri { border: 6px solid transparent; border-top: 7px solid #000; border-bottom: 0; }
.out-tabs { height: 30px; flex: none; display: flex; align-items: flex-start; padding-left: 5px; padding-top: 3px; padding-bottom: 4px; box-sizing: content-box; border-top: 1px solid #f4f4f0; }
.sb-h { width: 23px; height: 24px; background: #d4d0c8; box-shadow: inset 1px 1px #fff, inset -1px -1px #606060; display: flex; align-items: center; justify-content: center; flex: none; }
.tri-g-l { border: 6px solid transparent; border-right: 6px solid #909090; border-left: 0; }
.tri-g-r { border: 6px solid transparent; border-left: 6px solid #909090; border-right: 0; }
.xtab { position: relative; height: 24px; display: flex; align-items: center; justify-content: center; flex: none; box-sizing: border-box; }
.xtab em { position: relative; font-style: normal; }
.xtab-bg { position: absolute; inset: 0; width: 100%; height: 100%; }
.first-x { width: 118px; margin-left: 3px; padding-right: 4px; }
.sec-x { width: 162px; padding-right: 4px; }
.on-x { width: 96px; padding-right: 12px; }
.tab-gap { width: 218px; flex: none; }
.thumb-l { width: 32px; border-left: 3px solid #404040; box-sizing: border-box; }
.hatch { flex: 1; height: 24px; background: repeating-conic-gradient(#d4d0c8 0 25%, #fff 0 50%) 0 0 / 2px 2px; }
.end { width: 26px; }

/* Derecha */
.right { width: 38px; margin-left: 4px; flex: none; display: flex; flex-direction: column; align-items: stretch; box-sizing: border-box; }
.strip-r { margin: 0; }
.right > .bars { flex: none; margin: 2px 2px 3px; }
.rb { height: 36.5px; display: flex; align-items: center; justify-content: center; flex: none; margin: 0 1px; }
.rb.on { box-shadow: inset 1px 1px #808080, inset -1px -1px #fff; background: #dcd9d2; }
.rsep { height: 1px; background: #909090; box-shadow: 0 1px #fff; margin: 3px 1px 2px; flex: none; }

/* Estado */
.status { height: 37px; flex: none; display: flex; align-items: center; border-bottom: 1px solid #f4f4f0; box-sizing: border-box; }
.st {
  height: 26px;
  line-height: 24px;
  box-shadow: inset 1px 1px #9a9a94, inset -1px -1px #f4f4f0;
  padding-left: 2px;
  box-sizing: border-box;
  white-space: nowrap;
  flex: none;
  color: #111;
}
.st1 { width: 687px; margin-left: 3px; font-weight: 700; font-size: 15.6px; }
.st2 { width: 303px; margin-left: 7px; }
.st3 { width: 303px; margin-left: 6px; }
.st4 { width: 225px; margin-left: 6px; }
.st-ic { width: 32px; height: 32px; display: flex; align-items: center; justify-content: center; flex: none; }
.st-ic.on { box-shadow: inset 1px 1px #fff, inset -1px -1px #808080; }
.st4 + .st-ic { margin-left: 8px; }
.st-start { margin-left: 0; letter-spacing: -.3px; white-space: nowrap; }

/* Tareas */
.taskbar { height: 40px; flex: none; display: flex; align-items: center; padding-top: 1px; box-sizing: border-box; }
.task {
  height: 33px;
  box-shadow: inset 1px 1px #fff, inset -1px -1px #404040;
  display: flex;
  align-items: center;
  gap: 2px;
  padding-left: 3px;
  box-sizing: border-box;
  white-space: nowrap;
  flex: none;
  color: #111;
}
.inicio { width: 85px; margin-left: 2px; font-weight: 700; }
.tk-sep { width: 3px; height: 28px; margin: 0 10px; box-shadow: inset 1px 1px #fff, inset -1px -1px #808080; flex: none; }
.tk-sep.first { margin-right: 7px; }
.quick { width: 35px; display: flex; justify-content: center; flex: none; }
.t-active {
  width: 242px;
  font-weight: 700;
  box-shadow: inset 2px 2px #404040, inset -1px -1px #fff;
  background: repeating-conic-gradient(#d4d0c8 0 25%, #fff 0 50%) 0 0 / 2px 2px;
  margin-left: 2px;
}
.t-ppt { width: 238px; margin-left: 6px; }
.t-cur { width: 243px; margin-left: 7px; }
.tray {
  margin-left: auto;
  width: 279px;
  height: 33px;
  box-shadow: inset 1px 1px #808080, inset -1px -1px #fff;
  display: flex;
  align-items: center;
  gap: 1.7px;
  padding-left: 4px;
  box-sizing: border-box;
  flex: none;
  margin-right: 2px;
}
.es { width: 26px; height: 26px; background: #000080; color: #fff; font-size: 15px; text-align: center; line-height: 26px; flex: none; }
.clock { margin-left: 24px; }

/* Tooltip */
.tooltip {
  position: absolute;
  left: 913px;
  top: 146px;
  width: 345px;
  height: 38px;
  background: #ffffe1;
  border: 1px solid #000;
  box-sizing: border-box;
  text-align: center;
  line-height: 36px;
  white-space: nowrap;
  color: #111;
}

/* Dialogo */
.dialog {
  position: absolute;
  left: 487px;
  top: 324px;
  width: 773px;
  height: 664px;
  background: #d4d0c8;
  box-shadow: inset 1px 1px #f4f4f0, inset -2px -2px #505050;
  padding: 5px 5px 0 5px;
  box-sizing: border-box;
  display: flex;
  flex-direction: column;
}
.dlg-title {
  height: 26px;
  flex: none;
  display: flex;
  align-items: center;
  justify-content: space-between;
  background: linear-gradient(90deg, #0a246a, #a6caf0);
  color: #fff;
  font-weight: 700;
  font-size: 17px;
  letter-spacing: .7px;
  padding: 0 4px 0 1px;
}
.dlg-x { width: 22px; height: 21px; font-size: 17px; line-height: 20px; letter-spacing: 0; }
.dlg-tabs { display: flex; align-items: flex-end; height: 47px; margin-left: 15px; flex: none; }
.dtb {
  height: 27px;
  line-height: 30px;
  padding: 0 8px;
  box-shadow: inset 1px 1px #fff, inset -2px 0 #505050;
  flex: none;
  white-space: nowrap;
  color: #111;
  box-sizing: border-box;
}
.dtb:nth-child(1) { height: 31px; line-height: 31px; width: 124px; padding-left: 12px; }
.dtb:nth-child(2) { width: 128px; }
.dtb:nth-child(3) { width: 106px; padding-left: 9px; }
.dlg-page {
  height: 516px;
  margin-left: 15px;
  width: 734px;
  flex: none;
  box-shadow: inset 1px 1px #fff, inset -2px -2px #505050;
  padding: 7px 0 0 5px;
  box-sizing: border-box;
}
.fs {
  margin: 0;
  padding: 0 0 0 15px;
  border: 1px solid #8a8a84;
  box-shadow: 1px 1px #fff, inset 1px 1px #fff;
  box-sizing: border-box;
  min-width: 0;
}
.fs legend { padding: 0; margin-left: -2px; color: #111; line-height: 18px; }
.fs1 { width: 547px; height: 244px; }
.fs2 { width: 508px; height: 186px; margin-top: 4px; }
.frow { display: grid; grid-template-columns: 128px 70px 70px 71px auto; height: 30px; align-items: center; white-space: nowrap; color: #111; }
.frow.head { height: 31px; margin-top: -2px; margin-bottom: 2px; }
.c-label { grid-column: 1; }
.c-start { grid-column: 2; }
.c-len { grid-column: 4; }
.note { grid-column: 5; color: #8a8a84; margin-left: 3px; letter-spacing: -.2px; }
.inp {
  height: 29px;
  background: #fff;
  border: 2px solid;
  border-color: #707070 #f4f4f0 #f4f4f0 #707070;
  box-sizing: border-box;
  padding-left: 3px;
  line-height: 25px;
  position: relative;
  display: block;
}
.inp.off { background: #d4d0c8; }
.caret { display: inline-block; width: 1px; height: 18px; background: #000; vertical-align: -3px; }
.hint { margin: 7px 0 0; white-space: nowrap; color: #111; }
.radio-row { height: 30px; display: flex; align-items: center; gap: 10px; color: #111; white-space: nowrap; }
.fs2 .radio-row:first-of-type { margin-top: 3px; }
.radio {
  width: 16px;
  height: 16px;
  margin-left: 2px;
  border-radius: 50%;
  background: #fff;
  border: 2px solid;
  border-color: #707070 #f4f4f0 #f4f4f0 #707070;
  box-sizing: border-box;
  flex: none;
}
.radio.on { background: radial-gradient(#000 2.4px, #fff 3px); }
.sub-row { height: 32px; display: flex; align-items: center; padding-left: 28px; white-space: nowrap; }
.dis { color: #8f8f88; text-shadow: 1px 1px #f4f4f0; flex: none; }
.sub-row .inp { flex: none; }
.l1 { width: 42px; }
.s1 { width: 72px; }
.l2 { width: 59px; margin-left: 2px; }
.s2 { width: 72px; }
.l3 { width: 123px; }
.s3 { width: 140px; }
.l4 { width: 46px; margin-left: 1px; }
.s4 { width: 141px; }
.dlg-foot { display: flex; align-items: center; height: 66px; padding: 2px 15px 0 18px; flex: none; box-sizing: border-box; }
.grow { flex: 1; }
.btn {
  width: 113px;
  height: 34px;
  line-height: 32px;
  text-align: center;
  margin-left: 10px;
  box-shadow: inset 1px 1px #fff, inset -2px -2px #505050;
  color: #111;
  flex: none;
}
.btn.def { outline: 2px solid #000; outline-offset: -2px; box-shadow: inset 3px 3px #fff, inset -3px -3px #808080; }

.home {
  position: absolute;
  left: 1943px;
  top: 1413px;
  width: 80px;
  height: 80px;
  background: #b4d8dc;
}
</style>
